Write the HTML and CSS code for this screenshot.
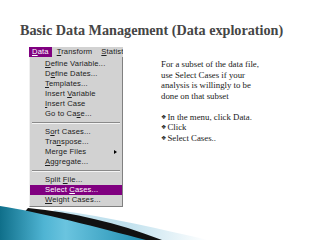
FILE: index.html
```html
<!DOCTYPE html>
<html lang="en">
<head>
    <meta charset="UTF-8">
    <title>Basic Data Management</title>
    <link rel="stylesheet" href="styles.css">
</head>
<body>

<div class="slide">
    <h1 class="slide-title">Basic Data Management (Data exploration)</h1>

    <div class="slide-body">
        <div class="menu">
            <div class="menu-bar">
                <span class="menu-bar-item active"><u>D</u>ata</span>
                <span class="menu-bar-item"><u>T</u>ransform</span>
                <span class="menu-bar-item"><u>S</u>tatist</span>
            </div>
            <div class="menu-list">
                <div class="menu-item"><u>D</u>efine Variable...</div>
                <div class="menu-item">D<u>e</u>fine Dates...</div>
                <div class="menu-item"><u>T</u>emplates...</div>
                <div class="menu-item">Insert <u>V</u>ariable</div>
                <div class="menu-item"><u>I</u>nsert Case</div>
                <div class="menu-item">Go to Ca<u>s</u>e...</div>
                <div class="menu-sep"></div>
                <div class="menu-item">S<u>o</u>rt Cases...</div>
                <div class="menu-item">Tra<u>n</u>spose...</div>
                <div class="menu-item has-sub"><span>Merge Files</span><span class="sub-arrow"></span></div>
                <div class="menu-item"><u>A</u>ggregate...</div>
                <div class="menu-sep"></div>
                <div class="menu-item">Split <u>F</u>ile...</div>
                <div class="menu-item selected">Select <u>C</u>ases...</div>
                <div class="menu-item"><u>W</u>eight Cases...</div>
            </div>
        </div>

        <div class="notes">
            <p>For a subset of the data file,<br>
               use Select Cases if your<br>
               analysis is willingly to be<br>
               done on that subset</p>
            <ul class="steps">
                <li>In the menu, click Data.</li>
                <li>Click</li>
                <li>Select Cases..</li>
            </ul>
        </div>
    </div>

    <!-- decorative swoosh at the bottom of the slide -->
    <svg class="swoosh" width="320" height="40" viewBox="0 0 320 40">
        <defs>
            <linearGradient id="paleBand" x1="0" y1="0" x2="1" y2="0">
                <stop offset="0" stop-color="#d2ebf4"/>
                <stop offset="0.6" stop-color="#bfe0ed"/>
                <stop offset="1" stop-color="#ffffff"/>
            </linearGradient>
            <linearGradient id="teal" x1="0" y1="0" x2="1" y2="0">
                <stop offset="0" stop-color="#0f6f8a"/>
                <stop offset="0.3" stop-color="#4fb4d3"/>
                <stop offset="0.45" stop-color="#6ac4df"/>
                <stop offset="1" stop-color="#1f8db0"/>
            </linearGradient>
        </defs>
        <path d="M55,10 C110,17 160,29 208,40 L0,40 Z" fill="url(#paleBand)"/>
        <path d="M28,8 C75,13 115,22 162,40 L0,40 Z" fill="#111"/>
        <path d="M0,6 C40,12 100,28 146,40 L0,40 Z" fill="url(#teal)"/>
    </svg>
</div>

</body>
</html>
```

FILE: styles.css
```css
body {
    margin: 0;
    background: #ffffff;
}

.slide {
    position: relative;
    width: 320px;
    height: 240px;
    overflow: hidden;
    background: #ffffff;
}

.slide-title {
    margin: 0;
    padding: 22px 0 0 20px;
    height: 16px;
    font-family: 'Liberation Serif', serif;
    font-size: 14.2px;
    line-height: 16px;
    font-weight: bold;
    color: #454545;
    white-space: nowrap;
}

.slide-body {
    display: flex;
    margin-top: 9px;
}

/* SPSS style dropdown */
.menu {
    margin-left: 29px;
    width: 94px;
    flex-shrink: 0;
    background: #d2d2d2;
    font-family: 'Liberation Sans', Arial, sans-serif;
    font-size: 7.6px;
    letter-spacing: 0.15px;
    color: #202020;
}

.menu-bar {
    display: flex;
    gap: 9px;
    height: 10px;
    line-height: 10px;
    white-space: nowrap;
    overflow: hidden;
}

.menu-bar-item.active {
    background: #800080;
    color: #ffffff;
    width: 18px;
    padding: 0 3px;
    margin-right: -4px;
}

.menu-list {
    padding: 2px 0 1px;
    border-right: 1px solid #808080;
    border-bottom: 1px solid #808080;
    border-left: 1px solid #f0f0f0;
}

.menu-item {
    height: 10px;
    line-height: 10px;
    padding-left: 15px;
    white-space: nowrap;
}

.menu-item u {
    text-decoration-thickness: 0.5px;
}

.menu-item.selected {
    background: #800080;
    color: #ffffff;
}

.has-sub {
    display: flex;
    align-items: center;
    justify-content: space-between;
    padding-right: 5px;
}

.sub-arrow {
    width: 0;
    height: 0;
    border-top: 2.5px solid transparent;
    border-bottom: 2.5px solid transparent;
    border-left: 3px solid #000000;
}

.menu-sep {
    height: 1px;
    margin: 3px 2px;
    border-top: 1px solid #8a8a8a;
    background: #f4f4f4;
}

.notes {
    margin-left: 38px;
    padding-top: 12px;
    font-family: 'Liberation Serif', serif;
    font-size: 8.8px;
    line-height: 10.5px;
    color: #1a1a1a;
}

.notes p {
    margin: 0 0 10.5px;
    white-space: nowrap;
}

.steps {
    list-style: none;
    margin: 0;
    padding: 0;
}

.steps li::before {
    content: "\2756";
    font-family: 'DejaVu Sans', sans-serif;
    font-size: 6px;
    margin-right: 1px;
    vertical-align: 1px;
}

.swoosh {
    position: absolute;
    left: 0;
    bottom: 0;
    display: block;
}
```
